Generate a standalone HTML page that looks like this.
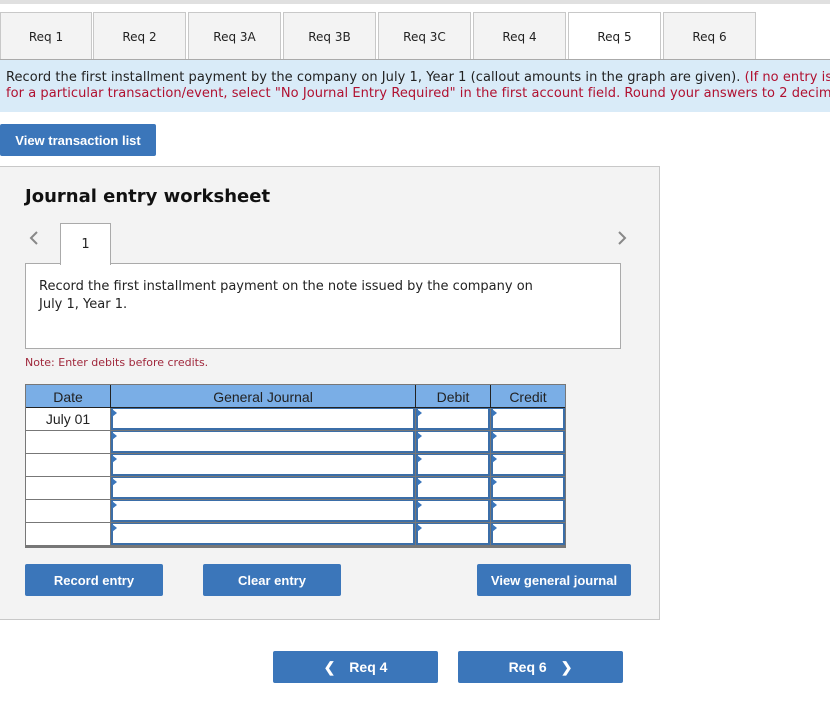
<!DOCTYPE html>
<html><head><meta charset="utf-8"><style>
*{box-sizing:border-box;margin:0;padding:0}
html,body{width:830px;height:701px;overflow:hidden}
body{background:#fff;position:relative;font-family:"DejaVu Sans",Verdana,sans-serif;color:#222}
.a{position:absolute}
.tab{position:absolute;top:12px;height:48px;background:#f3f3f3;border:1px solid #c8c8c8;border-bottom:none;font-size:12px;display:flex;align-items:center;justify-content:center;color:#222}
.btn{position:absolute;background:#3b76ba;color:#fff;font-family:"Liberation Sans",Arial,sans-serif;font-weight:bold;font-size:13px;display:flex;align-items:center;justify-content:center;border-radius:2px}
.cell{position:absolute;background:#fff}
.tri{position:absolute;width:0;height:0;border-top:4px solid transparent;border-bottom:4px solid transparent;border-left:5px solid #3b76ba}
.hd{position:absolute;top:385px;height:23px;background:#7aaee6;font-family:"Liberation Sans",Arial,sans-serif;font-size:14px;display:flex;align-items:center;justify-content:center;color:#222}
</style></head><body>
<div class="a" style="left:0;top:0;width:830px;height:4px;background:#e0e0e0"></div>
<div class="tab" style="left:0;width:92px">Req 1</div>
<div class="tab" style="left:93px;width:93px">Req 2</div>
<div class="tab" style="left:188px;width:93px">Req 3A</div>
<div class="tab" style="left:283px;width:93px">Req 3B</div>
<div class="tab" style="left:378px;width:93px">Req 3C</div>
<div class="tab" style="left:473px;width:93px">Req 4</div>
<div class="tab" style="left:568px;width:93px;background:#fff;height:49px">Req 5</div>
<div class="tab" style="left:663px;width:93px">Req 6</div>
<div class="a" style="left:0;top:59px;width:830px;height:1px;background:#aaa"></div>
<div class="a" style="left:0;top:60px;width:830px;height:52px;background:#d9ebf8;overflow:hidden">
<div class="a" style="left:6px;top:10px;white-space:nowrap;font-size:13px;line-height:16px;letter-spacing:0.05px">Record the first installment payment by the company on July 1, Year 1 (callout amounts in the graph are given). <span style="color:#b01030">(If no entry is required</span><br><span style="color:#b01030">for a particular transaction/event, select "No Journal Entry Required" in the first account field. Round your answers to 2 decimal places.)</span></div></div>
<div class="btn" style="left:0;top:124px;width:156px;height:32px">View transaction list</div>
<div class="a" style="left:0;top:166px;width:660px;height:454px;background:#f3f3f3;border:1px solid #c8c8c8;border-left:none"></div>
<div class="a" style="left:25px;top:186px;font-size:18px;font-weight:bold;color:#111">Journal entry worksheet</div>
<svg class="a" style="left:28px;top:230px" width="12" height="16"><path d="M9 2 L3 8 L9 14" fill="none" stroke="#888" stroke-width="2"/></svg>
<svg class="a" style="left:616px;top:230px" width="12" height="16"><path d="M3 2 L9 8 L3 14" fill="none" stroke="#888" stroke-width="2"/></svg>
<div class="a" style="left:25px;top:263px;width:596px;height:86px;background:#fff;border:1px solid #aaa"></div>
<div class="a" style="left:60px;top:223px;width:51px;height:42px;background:#fff;border:1px solid #aaa;border-bottom:none;font-size:13px;display:flex;align-items:center;justify-content:center">1</div>
<div class="a" style="left:39px;top:278px;font-size:13px;line-height:18px">Record the first installment payment on the note issued by the company on<br>July 1, Year 1.</div>
<div class="a" style="left:25px;top:356px;font-size:11px;color:#a0283c">Note: Enter debits before credits.</div>
<div class="a" style="left:25px;top:384px;width:541px;height:164px;background:#777"></div>
<div class="hd" style="left:26px;width:84px">Date</div>
<div class="hd" style="left:111px;width:304px">General Journal</div>
<div class="hd" style="left:416px;width:74px">Debit</div>
<div class="hd" style="left:491px;width:74px">Credit</div>
<div class="a" style="left:26px;top:407px;width:539px;height:1px;background:#222"></div>
<div class="a" style="left:110px;top:385px;width:1px;height:23px;background:#222"></div>
<div class="a" style="left:415px;top:385px;width:1px;height:23px;background:#222"></div>
<div class="a" style="left:490px;top:385px;width:1px;height:23px;background:#222"></div>
<div id="rows"></div>
<script>
var r=document.getElementById('rows'),h='';
for(var i=0;i<6;i++){var y=408+i*23;
h+='<div class="cell" style="left:26px;top:'+y+'px;width:84px;height:22px;font-family:Liberation Sans,Arial;font-size:14px;text-align:center;line-height:22px">'+(i==0?'July 01':'')+'</div>';
[[111,304],[416,74],[491,74]].forEach(function(c){
h+='<div class="cell" style="left:'+c[0]+'px;top:'+y+'px;width:'+c[1]+'px;height:22px;border:2px solid #3b6ea8;border-top:1px solid #3b6ea8"></div><div class="tri" style="left:'+(c[0]+1)+'px;top:'+(y+1)+'px"></div>';});}
r.innerHTML=h;
</script>
<div class="btn" style="left:25px;top:564px;width:138px;height:32px">Record entry</div>
<div class="btn" style="left:203px;top:564px;width:138px;height:32px">Clear entry</div>
<div class="btn" style="left:477px;top:564px;width:154px;height:32px">View general journal</div>
<div class="btn" style="left:273px;top:651px;width:165px;height:32px;font-size:14px"><span style="margin-right:14px">&#10094;</span>Req 4</div>
<div class="btn" style="left:458px;top:651px;width:165px;height:32px;font-size:14px">Req 6<span style="margin-left:14px">&#10095;</span></div>
</body></html>
